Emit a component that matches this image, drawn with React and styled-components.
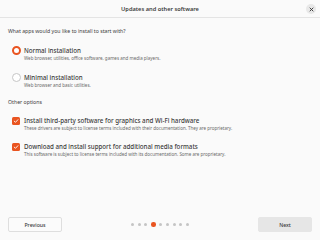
import React from 'react'
import styled, { createGlobalStyle } from 'styled-components'

const GlobalStyle = createGlobalStyle`
    html, body {
        margin:0;
        padding:0;
        background:#fafafa;
    }
    body {
        font-family:'Noto Sans', 'DejaVu Sans', sans-serif;
        color:#3d3d3d;
    }
`

const Window = styled.div`
    width:320px;
    height:240px;
    display:flex;
    flex-flow:column nowrap;
    background:#fafafa;
    overflow:hidden;
`

const Header = styled.div`
    flex:0 0 17px;
    display:flex;
    align-items:center;
    justify-content:center;
    position:relative;
    border-bottom:1px solid #e4e4e4;
`

const Title = styled.div`
    font-size:5.7px;
    font-weight:600;
    color:#3a3a3a;
`

const CloseButton = styled.div`
    position:absolute;
    right:4px;
    top:4px;
    width:10px;
    height:10px;
    border-radius:50%;
    background:#e8e8e8;
    display:flex;
    align-items:center;
    justify-content:center;
`

const Body = styled.div`
    flex:1 1 0%;
    padding:9px 8px 0 8px;
    display:flex;
    flex-flow:column nowrap;
`

const Question = styled.div`
    font-size:5.2px;
    line-height:8px;
    color:#3d3d3d;
`

const OptionList = styled.div`
    display:flex;
    flex-flow:column nowrap;
    gap:${p => p.gap}px;
    margin-top:${p => p.top}px;
`

const Option = styled.div`
    display:flex;
    align-items:flex-start;
`

const ControlSlot = styled.div`
    flex:0 0 16px;
    height:9px;
    display:flex;
    align-items:center;
    justify-content:center;
`

const Radio = styled.div`
    width:${p => p.checked ? 5 : 7}px;
    height:${p => p.checked ? 5 : 7}px;
    border-radius:50%;
    background:#fff;
    border:${p => p.checked ? '2.5px solid #e95420' : '1px solid #c6c6c6'};
`

const Check = styled.div`
    width:8px;
    height:8px;
    border-radius:1.5px;
    background:#e95420;
    display:flex;
    align-items:center;
    justify-content:center;
`

const OptionText = styled.div`
    display:flex;
    flex-flow:column nowrap;
`

const Label = styled.div`
    font-size:6.2px;
    line-height:9px;
    font-weight:500;
    color:#3a3a3a;
`

const Hint = styled.div`
    font-size:4.5px;
    line-height:7px;
    color:#6a6a6a;
`

const SectionTitle = styled.div`
    font-size:5.2px;
    line-height:8px;
    margin-top:${p => p.top}px;
    color:#3d3d3d;
`

const Footer = styled.div`
    flex:0 0 auto;
    display:flex;
    align-items:center;
    justify-content:space-between;
    padding:0 8px 8px 8px;
`

const Button = styled.div`
    width:54px;
    height:15px;
    box-sizing:border-box;
    border-radius:2px;
    display:flex;
    align-items:center;
    justify-content:center;
    font-size:5.2px;
    font-weight:500;
    color:#3a3a3a;
    background:${p => p.primary ? '#e6e6e6' : '#fbfbfb'};
    border:1px solid ${p => p.primary ? '#e6e6e6' : '#dedede'};
`

const Dots = styled.div`
    display:flex;
    align-items:center;
    gap:3.7px;
`

const Dot = styled.div`
    width:${p => p.active ? 4.5 : 3}px;
    height:${p => p.active ? 4.5 : 3}px;
    border-radius:50%;
    background:${p => p.active ? '#e95420' : '#c4c4c4'};
`

const CheckMark = () => (
    <svg width="6" height="6" viewBox="0 0 6 6">
        <path d="M1.2 3.1 L2.5 4.3 L4.9 1.7" fill="none" stroke="#fff" strokeWidth="0.9" strokeLinecap="round" strokeLinejoin="round" />
    </svg>
)

const CloseIcon = () => (
    <svg width="5" height="5" viewBox="0 0 5 5">
        <path d="M1 1 L4 4 M4 1 L1 4" stroke="#333" strokeWidth="0.9" strokeLinecap="round" />
    </svg>
)

const installTypes = [
    { label: 'Normal installation', hint: 'Web browser, utilities, office software, games and media players.', checked: true },
    { label: 'Minimal installation', hint: 'Web browser and basic utilities.', checked: false },
]

const extras = [
    { label: 'Install third-party software for graphics and Wi-Fi hardware', hint: 'These drivers are subject to license terms included with their documentation. They are proprietary.' },
    { label: 'Download and install support for additional media formats', hint: 'This software is subject to license terms included with its documentation. Some are proprietary.' },
]

const App = () => {
    const steps = [0, 1, 2, 3, 4, 5, 6, 7, 8]
    return (
        <Window>
            <GlobalStyle />
            <Header>
                <Title>Updates and other software</Title>
                <CloseButton><CloseIcon /></CloseButton>
            </Header>

            <Body>
                <Question>What apps would you like to install to start with?</Question>

                <OptionList gap={11} top={11}>
                    {installTypes.map((x, i) =>
                        <Option key={i}>
                            <ControlSlot><Radio checked={x.checked} /></ControlSlot>
                            <OptionText>
                                <Label>{x.label}</Label>
                                <Hint>{x.hint}</Hint>
                            </OptionText>
                        </Option>
                    )}
                </OptionList>

                <SectionTitle top={9}>Other options</SectionTitle>

                <OptionList gap={10} top={10}>
                    {extras.map((x, i) =>
                        <Option key={i}>
                            <ControlSlot><Check><CheckMark /></Check></ControlSlot>
                            <OptionText>
                                <Label>{x.label}</Label>
                                <Hint>{x.hint}</Hint>
                            </OptionText>
                        </Option>
                    )}
                </OptionList>
            </Body>

            <Footer>
                <Button>Previous</Button>
                <Dots>
                    {steps.map(i => <Dot key={i} active={i === 3} />)}
                </Dots>
                <Button primary>Next</Button>
            </Footer>
        </Window>
    )
}

export default App
